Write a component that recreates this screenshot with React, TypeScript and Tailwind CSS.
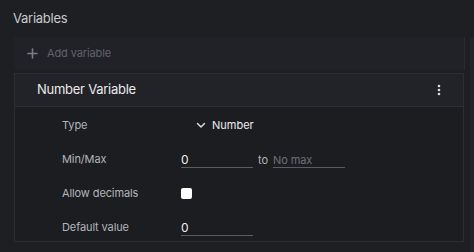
import React from "react";

function Plus() {
  return (
    <svg width="11" height="11" viewBox="0 0 11 11" fill="none">
      <path d="M5.5 1v9M1 5.5h9" stroke="#7b7e85" strokeWidth="1.6" strokeLinecap="round" />
    </svg>
  );
}

function Chevron() {
  return (
    <svg width="10" height="7" viewBox="0 0 10 7" fill="none">
      <path d="M1.5 1.5L5 5l3.5-3.5" stroke="#d7d8db" strokeWidth="1.5" strokeLinecap="round" strokeLinejoin="round" />
    </svg>
  );
}

function Kebab() {
  return (
    <svg width="4" height="12" viewBox="0 0 4 12" fill="#d9dbe0">
      <circle cx="2" cy="2" r="1.3" />
      <circle cx="2" cy="6" r="1.3" />
      <circle cx="2" cy="10" r="1.3" />
    </svg>
  );
}

function Row({ label, children }: { label: string; children: React.ReactNode }) {
  return (
    <div className="flex items-center h-[34px]">
      <div className="w-[119px] text-[11px] tracking-[-0.01em] text-[#b3b5ba]">{label}</div>
      <div className="flex items-center">{children}</div>
    </div>
  );
}

function Underline({ value, placeholder }: { value?: string; placeholder?: string }) {
  return (
    <div className="w-[72px] h-[17px] border-b border-[#5a5c62] flex items-end pb-[1px] text-[11px] leading-none">
      {value ? (
        <span className="text-[#eeeeef] text-[12px]">{value}</span>
      ) : (
        <span className="text-[#6d7077] tracking-[-0.01em]">{placeholder}</span>
      )}
    </div>
  );
}

export default function App() {
  return (
    <div
      className="w-[474px] h-[252px] bg-[#1e1f23] overflow-hidden relative"
      style={{ fontFamily: "Inter, 'Noto Sans', sans-serif" }}
    >
      <div className="absolute right-0 top-[38px] bottom-0 w-[4px] bg-[#24252a]" />
      <div className="pl-[13px] pt-[9px] h-[30px] text-[13px] tracking-[-0.02em] text-[#c9cacd] leading-[18px]">
        Variables
      </div>
      <div className="ml-[14px] mr-[9px] mt-[7px]">
        <div className="h-[33px] bg-[#212228] border-r border-[#2a2b31] flex items-center pl-[13px] gap-[9px]">
          <Plus />
          <span className="text-[11px] tracking-[-0.01em] text-[#60636a]">Add variable</span>
        </div>
        <div className="mt-[3px] border border-[#2c2e33] mr-[1px]">
          <div className="h-[33px] bg-[#222328] border-b border-[#2c2e33] flex items-center justify-between pl-[22px] pr-[22px]">
            <span className="text-[13px] tracking-[-0.02em] text-[#eaeaec]">Number Variable</span>
            <Kebab />
          </div>
          <div className="bg-[#1c1d21] pl-[47px] pt-[1px] h-[134px]">
            <Row label="Type">
              <div className="flex items-center ml-[15px] gap-[6px]">
                <Chevron />
                <span className="text-[11px] text-[#eeeeef]">Number</span>
              </div>
            </Row>
            <Row label="Min/Max">
              <Underline value="0" />
              <span className="text-[11px] text-[#b3b5ba] mx-[5px] mt-[2px]">to</span>
              <Underline placeholder="No max" />
            </Row>
            <Row label="Allow decimals">
              <div className="w-[11px] h-[11px] bg-white rounded-[2px]" />
            </Row>
            <Row label="Default value">
              <Underline value="0" />
            </Row>
          </div>
        </div>
      </div>
    </div>
  );
}
